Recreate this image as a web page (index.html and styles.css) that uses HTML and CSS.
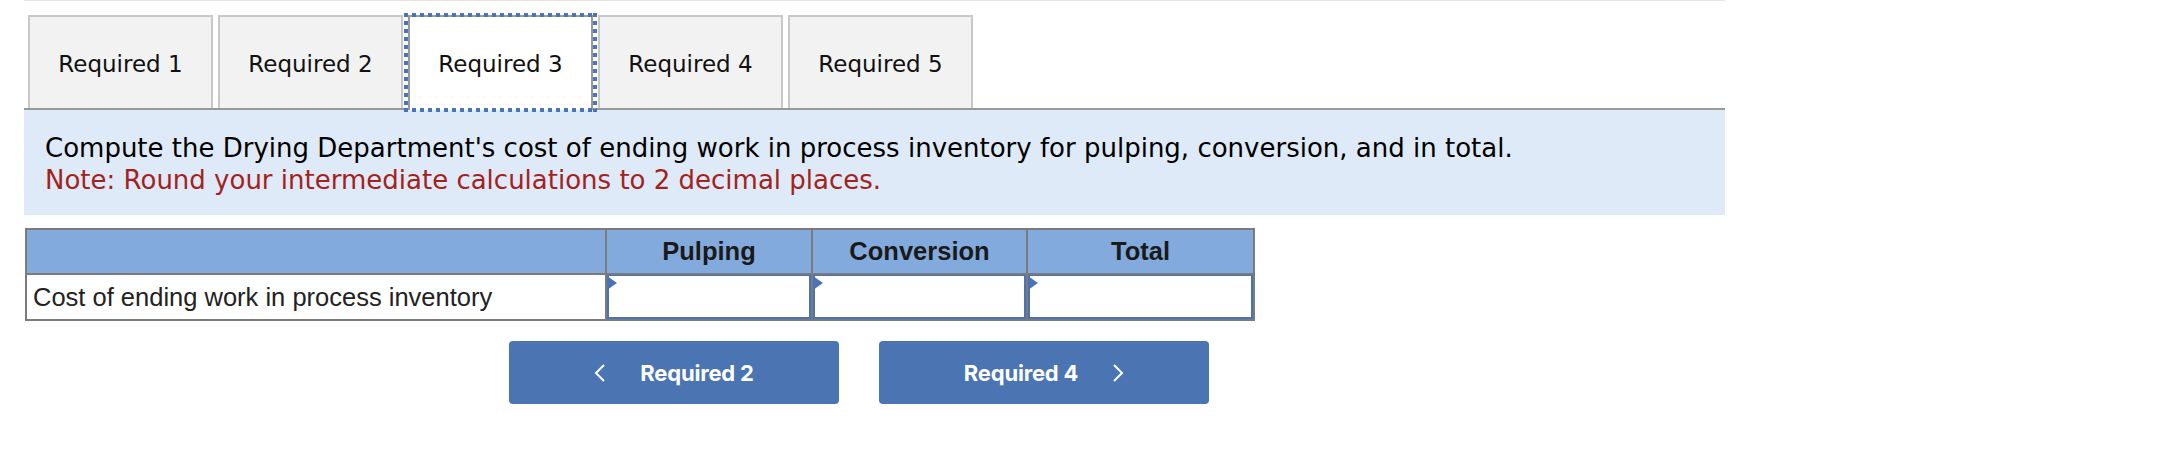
FILE: index.html
```html
<!DOCTYPE html>
<html lang="en">
<head>
	<meta charset="UTF-8">
	<title>Required 3</title>
	<link rel="stylesheet" href="styles.css">
</head>
<body>
<div class="page">
	<div class="tabs">
		<button class="tab">Required 1</button>
		<button class="tab">Required 2</button>
		<button class="tab active">Required 3</button>
		<button class="tab">Required 4</button>
		<button class="tab">Required 5</button>
	</div>

	<div class="prompt">
		<p>Compute the Drying Department's cost of ending work in process inventory for pulping, conversion, and in total.</p>
		<p class="note">Note: Round your intermediate calculations to 2 decimal places.</p>
	</div>

	<table class="grid">
		<tr>
			<th class="label-col"></th>
			<th class="c-pulp">Pulping</th>
			<th class="c-conv">Conversion</th>
			<th>Total</th>
		</tr>
		<tr>
			<td class="label">Cost of ending work in process inventory</td>
			<td class="cell"><span class="flag"></span><input type="text"></td>
			<td class="cell"><span class="flag"></span><input type="text"></td>
			<td class="cell"><span class="flag"></span><input type="text"></td>
		</tr>
	</table>

	<div class="nav">
		<button class="nav-btn">
			<svg width="12" height="18" viewBox="0 0 12 18"><path d="M10 1 L2 9 L10 17" fill="none" stroke="#fff" stroke-width="2"/></svg>
			<span>Required 2</span>
		</button>
		<button class="nav-btn">
			<span>Required 4</span>
			<svg width="12" height="18" viewBox="0 0 12 18"><path d="M2 1 L10 9 L2 17" fill="none" stroke="#fff" stroke-width="2"/></svg>
		</button>
	</div>
</div>
</body>
</html>
```

FILE: styles.css
```css
html,body{
	margin: 0;
	padding: 0;
	background-color: #fff;
}
.page{
	width: 1701px;
	margin-left: 24px;
	border-top: 1px solid #e4e4e4;
}

/* tabs */
.tabs{
	display: flex;
	align-items: flex-end;
	gap: 5px;
	margin-top: 14px;
	padding-left: 4px;
	border-bottom: 2px solid #999;
}
.tab{
	position: relative;
	box-sizing: border-box;
	width: 185px;
	height: 93px;
	padding: 3px 0 0;
	border: 2px solid #c8c8c8;
	border-bottom: none;
	background-color: #f2f2f2;
	color: #111;
	font-family: "DejaVu Sans", Verdana, sans-serif;
	font-size: 23px;
	cursor: pointer;
}
.tab.active{
	height: 95px;
	margin-bottom: -2px;
	padding-bottom: 2px;
	border-color: #999;
	background-color: #fff;
}
.tab.active::before{
	content: "";
	position: absolute;
	top: -4px;
	left: -6px;
	right: -6px;
	bottom: -2px;
	background:
		repeating-linear-gradient(90deg, #4a74b8 0 4px, transparent 4px 8px) top left / 100% 4px no-repeat,
		repeating-linear-gradient(90deg, #4a74b8 0 4px, transparent 4px 8px) bottom left / 100% 4px no-repeat,
		repeating-linear-gradient(180deg, #4a74b8 0 4px, transparent 4px 8px) top left / 4px 100% no-repeat,
		repeating-linear-gradient(180deg, #4a74b8 0 4px, transparent 4px 8px) top right / 4px 100% no-repeat;
}

/* prompt */
.prompt{
	padding: 22px 21px 19px;
	background-color: #deeaf7;
	font-family: "DejaVu Sans", Verdana, sans-serif;
	font-size: 26px;
	line-height: 32px;
	color: #000;
}
.prompt p{
	margin: 0;
}
.prompt .note{
	color: #a4221d;
}

/* table */
.grid{
	width: 1230px;
	margin: 13px 0 0 1px;
	border: 2px solid #7b7b7b;
	border-spacing: 0;
	font-family: "Liberation Sans", Arial, sans-serif;
	font-size: 25.5px;
}
.grid th{
	height: 43px;
	padding: 0;
	background-color: #83aadd;
	color: #1a1a1a;
	font-weight: bold;
	text-align: center;
	border-left: 2px solid #7b7b7b;
}
.grid th.label-col{
	width: 578px;
	border-left: none;
}
.grid th.c-pulp{ width: 204px; }
.grid th.c-conv{ width: 213px; }
.grid td{
	height: 44px;
	padding: 0;
	border-top: 2px solid #7b7b7b;
	border-left: 2px solid #7b7b7b;
}
.grid td.label{
	padding-left: 6px;
	border-left: none;
	color: #222;
}
.grid td.cell{
	position: relative;
}
.grid input{
	display: block;
	box-sizing: border-box;
	width: 100%;
	height: 44px;
	margin: 0;
	border: 2px solid #4a73b5;
	border-top-width: 1px;
	background-color: #fff;
	outline: none;
}
.flag{
	position: absolute;
	top: 1px;
	left: 0;
	width: 0;
	height: 0;
	border-left: 10px solid #4a73b5;
	border-top: 7px solid transparent;
	border-bottom: 7px solid transparent;
}

/* prev / next */
.nav{
	display: flex;
	gap: 40px;
	margin-top: 20px;
	padding-left: 485px;
}
.nav-btn{
	display: flex;
	align-items: center;
	justify-content: center;
	gap: 34px;
	width: 330px;
	height: 63px;
	padding: 0;
	border: none;
	border-radius: 4px;
	background-color: #4a74b2;
	color: #fff;
	font-family: Inter, Roboto, sans-serif;
	font-weight: bold;
	font-size: 22px;
	letter-spacing: -0.2px;
	cursor: pointer;
}
.nav-btn svg{
	display: block;
}
```
